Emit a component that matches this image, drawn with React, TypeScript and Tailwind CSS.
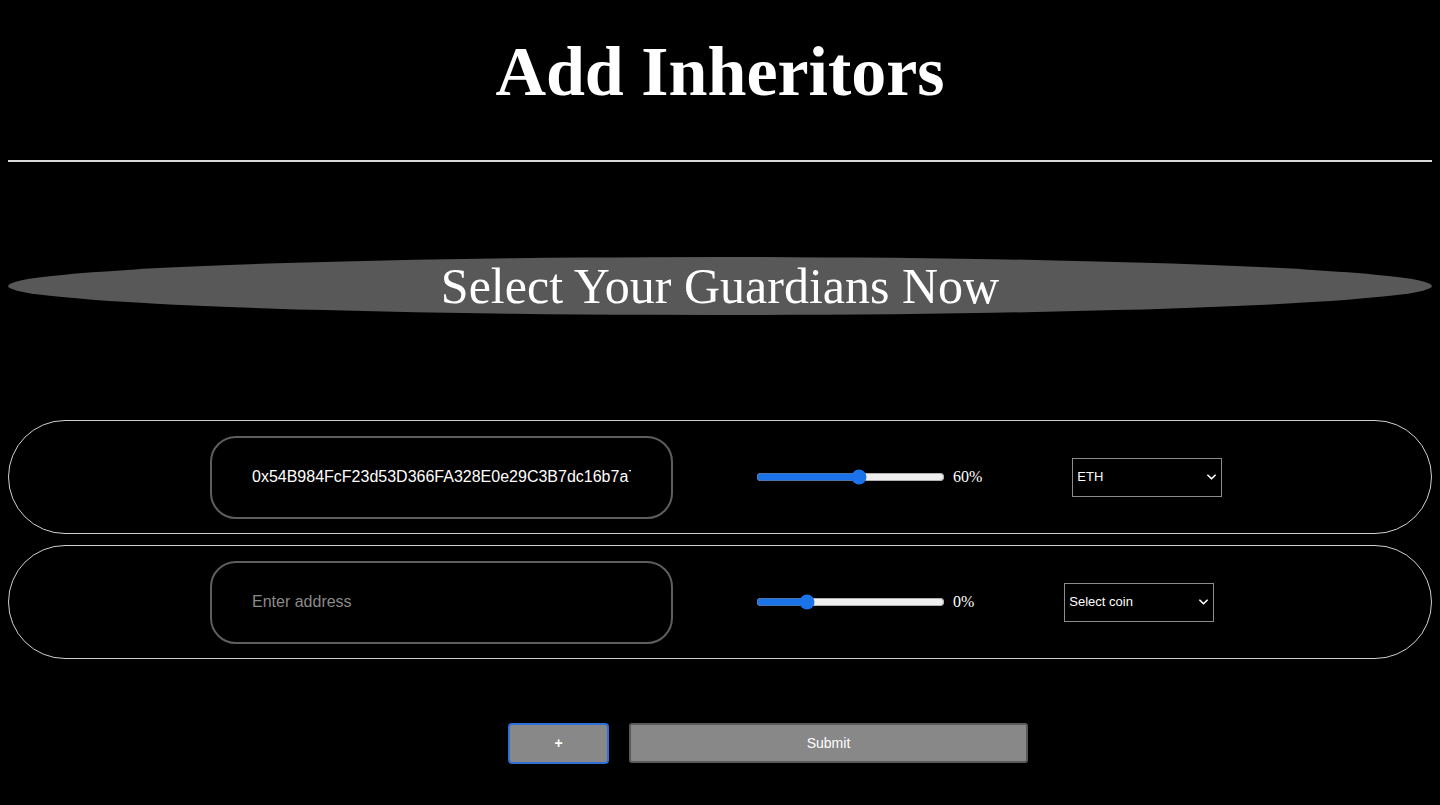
import { useState } from "react";

const serif = "font-['Liberation_Serif','Times_New_Roman',serif]";
const sans = "font-['Liberation_Sans',Arial,sans-serif]";

function Chevron() {
  return (
    <svg
      viewBox="0 0 10 6"
      className="pointer-events-none absolute right-[6px] top-1/2 h-[6px] w-[9px] -translate-y-1/2"
      fill="none"
      stroke="white"
      strokeWidth="1.8"
      strokeLinecap="round"
      strokeLinejoin="round"
    >
      <path d="M1 1l4 4 4-4" />
    </svg>
  );
}

function InheritorRow({
  address,
  share,
  label,
  coin,
}: {
  address: string;
  share: number;
  label: string;
  coin: string;
}) {
  const [value, setValue] = useState(share);
  return (
    <div className="flex h-[114px] items-center rounded-full border border-[#d0d0d0] pl-[201px]">
      <input
        type="text"
        defaultValue={address}
        placeholder="Enter address"
        className={`${sans} h-[83px] w-[463px] rounded-[26px] border-2 border-[#5e5e5e] bg-black px-[40px] text-[16px] text-white outline-none placeholder:text-[#8a8a8a]`}
      />
      <input
        type="range"
        min={0}
        max={100}
        value={value}
        onChange={(e) => setValue(Number(e.target.value))}
        className="ml-[83px] w-[189px] accent-[#1a73e8]"
      />
      <span className="ml-[8px] font-['Liberation_Serif','Times_New_Roman',serif] text-[16px] text-white">
        {label}
      </span>
      <div className="relative ml-[90px]">
        <select
          defaultValue={coin}
          className={`${sans} h-[39px] w-[150px] appearance-none rounded-none border border-[#8c8c8c] bg-black pl-[4px] text-[13px] text-white outline-none`}
        >
          <option value="">Select coin</option>
          <option value="ETH">ETH</option>
          <option value="USDC">USDC</option>
        </select>
        <Chevron />
      </div>
    </div>
  );
}

export default function App() {
  return (
    <div className="min-h-screen bg-black px-[8px] text-white">
      <h1 className={`${serif} pt-[32px] text-center text-[70px] font-bold leading-[80px]`}>
        Add Inheritors
      </h1>
      <hr className="mt-[48px] border-t-2 border-[#d8d8d8]" />
      <div className="mt-[95px] flex h-[58px] items-center justify-center rounded-[50%] bg-[#585858]">
        <h2 className={`${serif} text-[50px] leading-none text-white`}>Select Your Guardians Now</h2>
      </div>
      <div className="mt-[105px] flex flex-col gap-[11px]">
        <InheritorRow
          address="0x54B984FcF23d53D366FA328E0e29C3B7dc16b7a7"
          share={55}
          label="60%"
          coin="ETH"
        />
        <InheritorRow address="" share={25} label="0%" coin="" />
      </div>
      <div className="mt-[64px] flex gap-[20px] pl-[500px]">
        <button
          className={`${sans} h-[41px] w-[101px] rounded-[4px] border-2 border-[#2f6fd6] bg-[#888888] text-[14px] font-bold text-white`}
        >
          +
        </button>
        <button
          className={`${sans} h-[40px] w-[399px] rounded-[3px] border-2 border-[#5a5a5a] bg-[#888888] text-[14px] text-white`}
        >
          Submit
        </button>
      </div>
    </div>
  );
}
